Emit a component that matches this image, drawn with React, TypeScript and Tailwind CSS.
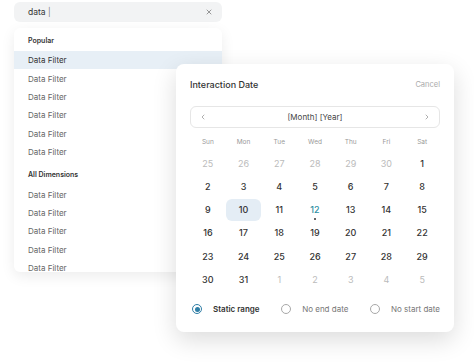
import React from 'react';
import { X, ChevronLeft, ChevronRight } from 'lucide-react';

const popular = ['Data Filter', 'Data Filter', 'Data Filter', 'Data Filter', 'Data Filter', 'Data Filter'];
const dimensions = ['Data Filter', 'Data Filter', 'Data Filter', 'Data Filter', 'Data Filter'];
const weekdays = ['Sun', 'Mon', 'Tue', 'Wed', 'Thu', 'Fri', 'Sat'];

type Day = { n: number; muted?: boolean };

const days: Day[] = [
  ...[25, 26, 27, 28, 29, 30].map((n) => ({ n, muted: true })),
  ...Array.from({ length: 31 }, (_, i) => ({ n: i + 1 })),
  ...[1, 2, 3, 4, 5].map((n) => ({ n, muted: true })),
];

const Radio = ({ checked, label }: { checked?: boolean; label: string }) => (
  <div className="flex items-center gap-[11px]">
    {checked ? (
      <span className="flex h-[10px] w-[10px] items-center justify-center rounded-full border-[1.5px] border-[#2f7ea6]">
        <span className="h-[5px] w-[5px] rounded-full bg-[#2f7ea6]" />
      </span>
    ) : (
      <span className="h-[10px] w-[10px] rounded-full border border-[#a8a8a8]" />
    )}
    <span className={checked ? 'text-[8px] font-semibold text-[#333]' : 'text-[8px] text-[#777]'}>{label}</span>
  </div>
);

const App = () => {
  return (
    <div className="relative h-[362px] w-[474px] overflow-hidden bg-white" style={{ fontFamily: 'Inter, "Noto Sans", sans-serif' }}>
      {/* Search + dropdown */}
      <div className="ml-[14px] w-[208px] pt-[2px]">
        <div className="flex h-[20px] items-center justify-between rounded-md bg-[#f2f3f4] pl-[14px] pr-[9px]">
          <span className="text-[8.5px] text-[#333]">
            data <span className="font-light text-[#555]">|</span>
          </span>
          <X className="h-[8px] w-[8px] text-[#666]" strokeWidth={2} />
        </div>

        <div className="mt-[6px] h-[244px] overflow-hidden rounded-md bg-white shadow-[0_4px_14px_rgba(0,0,0,0.08)]">
          <div className="h-[23px] pl-[14px] pt-[8px] text-[7px] font-semibold text-[#333]">Popular</div>
          {popular.map((p, i) => (
            <div
              key={i}
              className={
                i === 0
                  ? 'flex h-[18.4px] items-center bg-[#e7eff6] pl-[14px] text-[8px] text-[#333]'
                  : 'flex h-[18.4px] items-center pl-[14px] text-[8px] text-[#666]'
              }
            >
              {p}
            </div>
          ))}
          <div className="h-[24px] pl-[14px] pt-[9px] text-[7px] font-semibold text-[#333]">All Dimensions</div>
          {dimensions.map((p, i) => (
            <div key={i} className="flex h-[18.4px] items-center pl-[14px] text-[8px] text-[#666]">
              {p}
            </div>
          ))}
        </div>
      </div>

      {/* Date picker popover */}
      <div className="absolute left-[176px] top-[64px] h-[268px] w-[278px] rounded-lg bg-white px-[14px] pt-[14px] shadow-[0_8px_24px_rgba(0,0,0,0.14)]">
        <div className="flex h-[14px] items-center justify-between">
          <span className="text-[9px] font-medium text-[#333]">Interaction Date</span>
          <span className="text-[7.5px] text-[#aaa]">Cancel</span>
        </div>

        <div className="mt-[14px] flex h-[22px] items-center justify-between rounded-md border border-[#e6e6e6] px-[8px]">
          <ChevronLeft className="h-[8px] w-[8px] text-[#888]" strokeWidth={2} />
          <span className="text-[8px] text-[#444]">[Month] [Year]</span>
          <ChevronRight className="h-[8px] w-[8px] text-[#888]" strokeWidth={2} />
        </div>

        <div className="mt-[6px] grid grid-cols-7">
          {weekdays.map((w) => (
            <div key={w} className="flex h-[18px] items-center justify-center text-[6.5px] text-[#999]">
              {w}
            </div>
          ))}
          {days.map((d, i) => {
            const selected = !d.muted && d.n === 10;
            const today = !d.muted && d.n === 12;
            return (
              <div key={i} className="flex h-[23.2px] items-center justify-center">
                <div
                  className={
                    'relative flex h-[22px] w-[35px] items-center justify-center rounded-md text-[9px] ' +
                    (d.muted
                      ? 'text-[#bbb]'
                      : today
                        ? 'font-medium text-[#2e8fa3]'
                        : 'font-medium text-[#333]') +
                    (selected ? ' bg-[#e4edf5]' : '')
                  }
                >
                  {d.n}
                  {today && <span className="absolute bottom-[1px] h-[2px] w-[2px] rounded-full bg-[#333]" />}
                </div>
              </div>
            );
          })}
        </div>

        <div className="mt-[8px] flex h-[20px] items-center justify-between pl-[2px]">
          <Radio checked label="Static range" />
          <Radio label="No end date" />
          <Radio label="No start date" />
        </div>
      </div>
    </div>
  );
};

export default App;
